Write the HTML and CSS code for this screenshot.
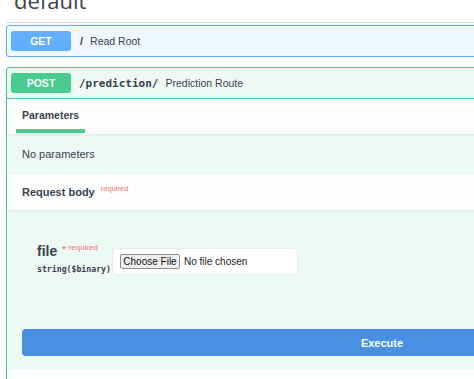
FILE: index.html
```html
<!DOCTYPE html>
<html lang="en">

<head>
  <meta charset="UTF-8">
  <title>FastAPI - Swagger UI</title>
  <link rel="stylesheet" href="styles.css">
</head>

<body>
  <div class="page">
    <h3 class="tag">default</h3>

    <!-- GET / -->
    <div class="opblock get">
      <div class="summary">
        <span class="method">GET</span>
        <span class="path">/</span>
        <span class="desc">Read Root</span>
      </div>
    </div>

    <!-- POST /prediction/ (expanded) -->
    <div class="opblock post">
      <div class="summary">
        <span class="method">POST</span>
        <span class="path mono">/prediction/</span>
        <span class="desc">Prediction Route</span>
      </div>

      <div class="section-header tabs">
        <div class="tab">Parameters</div>
      </div>
      <div class="section-body">No parameters</div>

      <div class="section-header">
        <h4>Request body <span class="req">required</span></h4>
      </div>
      <div class="request-body">
        <div class="param">
          <div class="param-name">
            <div class="name">file <span class="star">*</span><span class="req">required</span></div>
            <div class="type">string($binary)</div>
          </div>
          <div class="file-box">
            <span class="file-btn">Choose File</span>
            <span class="file-text">No file chosen</span>
          </div>
        </div>
        <button class="execute">Execute</button>
      </div>

      <!-- responses header starts just below the fold -->
      <div class="section-header"></div>
    </div>
  </div>
</body>

</html>
```

FILE: styles.css
```css
body {
  margin: 0;
  overflow: hidden;
  font-family: "Liberation Sans", Arial, sans-serif;
  color: #3b4151;
  background: #fff;
}

.page {
  width: 752px;
  padding: 0 6px;
}

.tag {
  margin: -12px 0 0;
  padding: 0 8px 10px;
  font: 500 22px/24px "Open Sans", "Liberation Sans", sans-serif;
  color: #3b4151;
  border-bottom: 1px solid #d8d9dc;
}

.opblock {
  margin-top: 2px;
  margin-bottom: 10px;
  border: 1px solid;
  border-radius: 3px;
  box-shadow: 0 0 2px rgba(0, 0, 0, .15);
}

.opblock.get {
  background: #eff7ff;
  border-color: #61affe;
}

.opblock.post {
  background: #edfaf4;
  border-color: #49cc90;
}

.summary {
  display: flex;
  align-items: center;
  padding: 5px 4px;
}

.post .summary {
  border-bottom: 1px solid #49cc90;
}

.method {
  width: 60px;
  height: 20px;
  line-height: 20px;
  text-align: center;
  border-radius: 3px;
  font-size: 10.5px;
  font-weight: bold;
  color: #fff;
}

.get .method {
  background: #61affe;
}

.post .method {
  background: #49cc90;
}

.path {
  margin-left: 9px;
  font-size: 11px;
  font-weight: bold;
}

.path.mono {
  margin-left: 8px;
  font-family: "DejaVu Sans Mono", monospace;
  font-size: 11px;
}

.desc {
  margin-left: 7px;
  font-size: 10.5px;
  color: #3b4151;
}

.section-header {
  display: flex;
  align-items: center;
  height: 36px;
  padding: 0 15px;
  background: rgba(255, 255, 255, .85);
  box-shadow: 0 1px 2px rgba(0, 0, 0, .08);
}

.section-header h4 {
  margin: 0;
  font-size: 11px;
  font-weight: bold;
}

.section-header .req {
  position: relative;
  top: -5px;
  margin-left: 3px;
  font-size: 7.5px;
  font-weight: normal;
  color: #ff6f6f;
}

.tabs {
  box-sizing: border-box;
  height: 35px;
  align-items: flex-end;
  padding: 0 0 1px 9px;
}

.tab {
  padding: 0 6px;
  font-size: 10.5px;
  font-weight: bold;
  line-height: 13px;
  position: relative;
  padding-bottom: 11px;
}

.tab::after {
  content: "";
  position: absolute;
  left: 0;
  right: 0;
  bottom: 0;
  height: 4px;
  background: #49cc90;
}

.section-body {
  display: flex;
  align-items: center;
  height: 40px;
  padding: 0 15px;
  font-size: 11px;
}

.request-body {
  padding: 33px 15px 13px;
}

.param {
  display: flex;
  align-items: flex-start;
  padding-left: 15px;
}

.param-name {
  width: 75px;
}

.name {
  font-size: 14px;
  font-weight: bold;
  line-height: 16px;
  white-space: nowrap;
}

.star {
  position: relative;
  top: -4px;
  margin-left: 1px;
  font-size: 9px;
  color: #ff6f6f;
}

.name .req {
  position: relative;
  top: -6px;
  margin-left: 3px;
  font-size: 8px;
  font-weight: normal;
  color: #ff6f6f;
}

.type {
  margin-top: 2px;
  font-family: "DejaVu Sans Mono", monospace;
  font-size: 8.2px;
  font-weight: bold;
  color: #3b4151;
}

.file-box {
  display: flex;
  align-items: center;
  box-sizing: border-box;
  width: 186px;
  height: 27px;
  margin-top: 5px;
  padding: 0 7px;
  background: #fff;
  border: 1px solid #e8ecea;
  border-radius: 4px;
}

.file-btn {
  display: inline-block;
  box-sizing: border-box;
  width: 60px;
  height: 15px;
  line-height: 13px;
  text-align: center;
  font-size: 10px;
  color: #111;
  background: #efefef;
  border: 1px solid #8f8f8f;
  border-radius: 2px;
}

.file-text {
  margin-left: 4px;
  font-size: 10px;
  color: #222;
}

.execute {
  display: block;
  width: 720px;
  height: 27px;
  margin-top: 54px;
  border: 0;
  border-radius: 4px;
  background: #4990e2;
  color: #fff;
  font-family: "Liberation Sans", Arial, sans-serif;
  font-size: 11px;
  font-weight: bold;
}
```
